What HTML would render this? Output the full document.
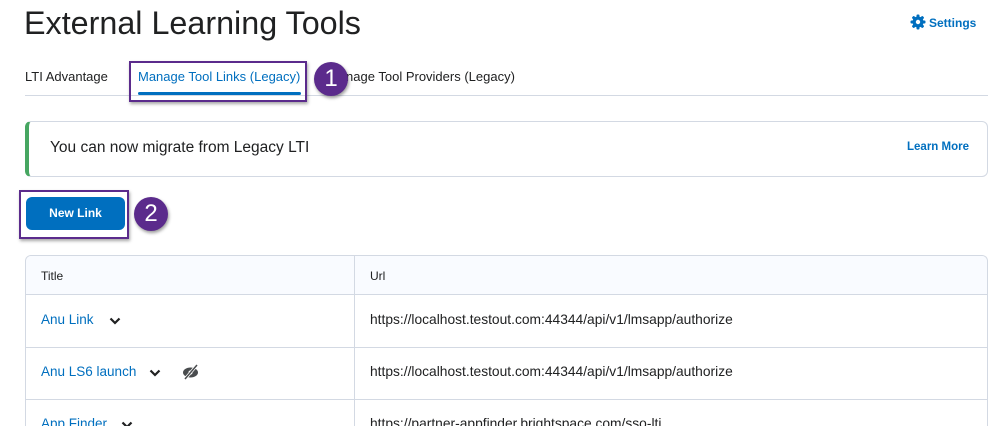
<!DOCTYPE html>
<html><head><style>
*{margin:0;padding:0;box-sizing:border-box}
html,body{width:1008px;height:426px;overflow:hidden}
body{background:#fff;font-family:"Liberation Sans",sans-serif;position:relative;color:#202122}
.a{position:absolute}
.blue{color:#006fbf}
.hl{position:absolute;border:2px solid #5b2b8c;box-shadow:1px 2px 3px rgba(0,0,0,.35)}
.circ{position:absolute;width:34px;height:34px;border-radius:50%;background:#5b2b8c;color:#fff;font-size:24px;text-align:center;line-height:34px;box-shadow:1px 2px 3px rgba(0,0,0,.4)}
.cell{position:absolute;font-size:13.5px;line-height:16px}
</style></head><body>
<div class="a" style="left:24px;top:5px;font-size:32.3px;color:#202122">External Learning Tools</div>
<div class="a blue" style="left:910px;top:14px;font-size:12px;font-weight:bold">
<svg width="16" height="16" viewBox="0 0 16 16" style="vertical-align:-3px;margin-right:3px"><g fill="#006fbf"><circle cx="8" cy="8" r="5.5"/><rect x="6.5" y="0.5" width="3" height="15" rx="1"/><rect x="0.5" y="6.5" width="15" height="3" rx="1"/><rect x="6.5" y="0.5" width="3" height="15" rx="1" transform="rotate(45 8 8)"/><rect x="6.5" y="0.5" width="3" height="15" rx="1" transform="rotate(-45 8 8)"/></g><circle cx="8" cy="8" r="2.2" fill="#fff"/></svg>Settings</div>
<div class="a" style="left:25px;top:69px;font-size:13px">LTI Advantage</div>
<div class="a" style="left:328px;top:69px;font-size:13px">Manage Tool Providers (Legacy)</div>
<div class="a blue" style="left:138px;top:69px;font-size:13px;background:#fff">Manage Tool Links (Legacy)</div>
<div class="a" style="left:138px;top:92px;width:163px;height:3px;background:#006fbf;border-radius:2px"></div>
<div class="a" style="left:25px;top:95px;width:963px;height:1px;background:#d3d9e3"></div>
<div class="hl" style="left:129px;top:61px;width:178px;height:41px"></div>
<div class="circ" style="left:314px;top:62px">1</div>
<div class="a" style="left:25px;top:121px;width:963px;height:56px;border:1px solid #d3d9e3;border-left:4px solid #46a661;border-radius:6px"></div>
<div class="a" style="left:50px;top:139px;font-size:15.5px">You can now migrate from Legacy LTI</div>
<div class="a blue" style="left:907px;top:141px;font-size:11.5px;font-weight:bold">Learn More</div>
<div class="a" style="left:26px;top:197px;width:99px;height:33px;background:#006fbf;border-radius:6px;color:#fff;font-size:12px;font-weight:bold;text-align:center;line-height:33px">New Link</div>
<div class="hl" style="left:19px;top:190px;width:110px;height:49px"></div>
<div class="circ" style="left:134px;top:197px">2</div>
<div class="a" style="left:25px;top:255px;width:963px;height:171px;border:1px solid #d3d9e3;border-bottom:none;border-radius:6px 6px 0 0;overflow:hidden">
<div class="a" style="left:0;top:0;width:963px;height:39px;background:#f9fbff;border-bottom:1px solid #d3d9e3"></div>
<div class="a" style="left:0;top:91px;width:963px;height:1px;background:#d3d9e3"></div>
<div class="a" style="left:0;top:143px;width:963px;height:1px;background:#d3d9e3"></div>
<div class="a" style="left:328px;top:0;width:1px;height:171px;background:#d3d9e3"></div>
<div class="cell blue" style="left:15px;top:160px">App Finder</div>
<svg class="a" style="left:95px;top:165px" width="12" height="8"><path d="M1.5 1.5 6 6 10.5 1.5" stroke="#202122" stroke-width="2.2" fill="none"/></svg>
<div class="cell" style="left:344px;top:160px;font-size:13.8px">https://partner-appfinder.brightspace.com/sso-lti</div>
</div>
<div class="cell" style="left:41px;top:268px;font-size:12px">Title</div>
<div class="cell" style="left:370px;top:268px;font-size:12px">Url</div>
<div class="cell blue" style="left:41px;top:312px">Anu Link</div>
<div class="cell blue" style="left:41px;top:364px">Anu LS6 launch</div>
<svg class="a" style="left:109px;top:317px" width="12" height="8"><path d="M1.5 1.5 6 6 10.5 1.5" stroke="#202122" stroke-width="2.2" fill="none"/></svg>
<svg class="a" style="left:149px;top:369px" width="12" height="8"><path d="M1.5 1.5 6 6 10.5 1.5" stroke="#202122" stroke-width="2.2" fill="none"/></svg>
<svg class="a" style="left:182px;top:364px" width="18" height="16"><ellipse cx="8.5" cy="8.5" rx="7.5" ry="5" fill="#494c4e"/><circle cx="8.5" cy="8.5" r="2" fill="#fff"/><path d="M15 1 3 15" stroke="#fff" stroke-width="3"/><path d="M15 1 3 15" stroke="#494c4e" stroke-width="1.5"/></svg>
<div class="cell" style="left:370px;top:312px;font-size:13.8px">https://localhost.testout.com:44344/api/v1/lmsapp/authorize</div>
<div class="cell" style="left:370px;top:364px;font-size:13.8px">https://localhost.testout.com:44344/api/v1/lmsapp/authorize</div>
</body></html>
